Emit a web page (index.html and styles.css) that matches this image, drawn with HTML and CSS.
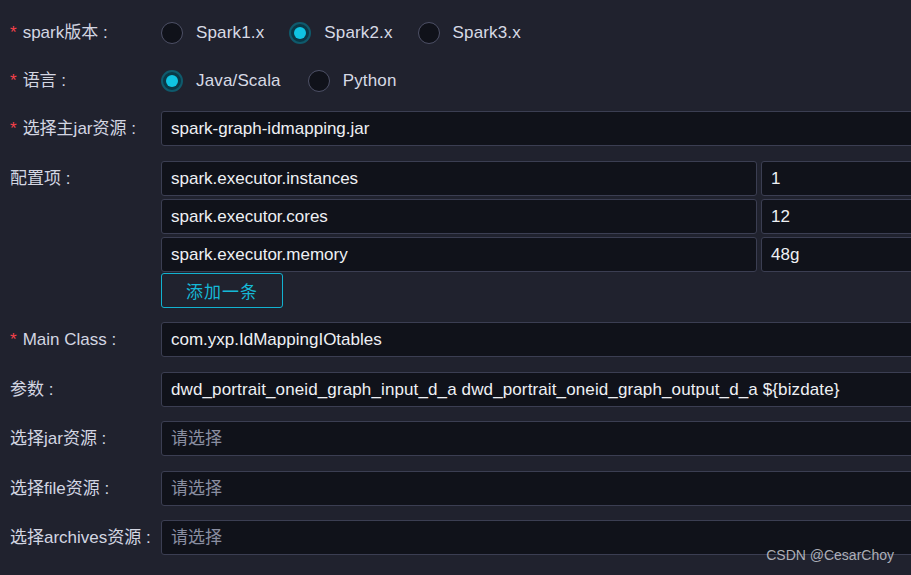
FILE: index.html
```html
<!DOCTYPE html>
<html lang="zh">
<head>
<meta charset="utf-8">
<link rel="stylesheet" href="styles.css">
</head>
<body>
<form class="form">
  <div class="item item-radio">
    <label class="label"><span class="req">*</span>spark版本 :</label>
    <div class="control radios">
      <span class="radio"><span class="dot"></span>Spark1.x</span>
      <span class="radio checked"><span class="dot"></span>Spark2.x</span>
      <span class="radio"><span class="dot"></span>Spark3.x</span>
    </div>
  </div>
  <div class="item item-radio second">
    <label class="label"><span class="req">*</span>语言 :</label>
    <div class="control radios">
      <span class="radio checked wide"><span class="dot"></span>Java/Scala</span>
      <span class="radio"><span class="dot"></span>Python</span>
    </div>
  </div>
  <div class="item">
    <label class="label"><span class="req">*</span>选择主jar资源 :</label>
    <div class="control"><div class="input">spark-graph-idmapping.jar</div></div>
  </div>
  <div class="item">
    <label class="label">配置项 :</label>
    <div class="control">
      <div class="conf-row"><div class="input key">spark.executor.instances</div><div class="input val">1</div></div>
      <div class="conf-row"><div class="input key">spark.executor.cores</div><div class="input val">12</div></div>
      <div class="conf-row"><div class="input key">spark.executor.memory</div><div class="input val">48g</div></div>
      <button type="button" class="btn">添加一条</button>
    </div>
  </div>
  <div class="item">
    <label class="label"><span class="req">*</span>Main Class :</label>
    <div class="control"><div class="input">com.yxp.IdMappingIOtables</div></div>
  </div>
  <div class="item">
    <label class="label">参数 :</label>
    <div class="control"><div class="input args">dwd_portrait_oneid_graph_input_d_a dwd_portrait_oneid_graph_output_d_a ${bizdate}</div></div>
  </div>
  <div class="item">
    <label class="label">选择jar资源 :</label>
    <div class="control"><div class="input placeholder">请选择</div></div>
  </div>
  <div class="item">
    <label class="label">选择file资源 :</label>
    <div class="control"><div class="input placeholder">请选择</div></div>
  </div>
  <div class="item">
    <label class="label">选择archives资源 :</label>
    <div class="control"><div class="input placeholder">请选择</div></div>
  </div>
</form>
<div class="watermark">CSDN @CesarChoy</div>
</body>
</html>
```
FILE: styles.css
```css
html, body {
  margin: 0;
  padding: 0;
  background: #20222e;
  overflow: hidden;
}
body {
  width: 911px;
  height: 575px;
  position: relative;
  font-family: "Liberation Sans", "Noto Sans CJK SC", sans-serif;
  font-size: 17px;
  color: #d3d6e2;
}
.form {
  padding: 16px 0 0 10px;
}
.item {
  display: flex;
  align-items: flex-start;
  margin-bottom: 14.5px;
}
.item-radio {
  margin-bottom: 14px;
  height: 34px;
}
.item-radio.second {
  margin-bottom: 13px;
}
.label {
  width: 151px;
  flex: none;
  line-height: 35px;
  height: 35px;
  white-space: nowrap;
  color: #d3d6e2;
}
.item-radio .label {
  line-height: 34px;
  height: 34px;
}
.req {
  color: #f5414a;
  margin-right: 6px;
}
.control {
  flex: 1;
  min-width: 0;
}
.radios {
  display: flex;
  align-items: center;
  height: 34px;
}
.radio {
  display: inline-flex;
  align-items: center;
  margin-right: 25px;
  color: #d7dae5;
  white-space: nowrap;
  letter-spacing: 0.15px;
}
.radio.wide {
  margin-right: 27px;
}
.dot {
  width: 22px;
  height: 22px;
  box-sizing: border-box;
  border-radius: 50%;
  border: 1px solid #4d5066;
  background: #10121a;
  margin-right: 13px;
  display: inline-flex;
  align-items: center;
  justify-content: center;
}
.checked .dot {
  border: 2px solid #0f5a6c;
  background: #0a3846;
}
.checked .dot::after {
  content: "";
  width: 12px;
  height: 12px;
  border-radius: 50%;
  background: #10c4e2;
}
.input {
  height: 35px;
  box-sizing: border-box;
  border: 1px solid #3b3e52;
  border-radius: 3px;
  background: #10121a;
  color: #eef0f4;
  line-height: 33px;
  padding: 0 9px;
  white-space: nowrap;
  overflow: hidden;
  margin-right: -6px;
}
.placeholder {
  color: #8a8ea1;
}
.conf-row {
  display: flex;
  gap: 4px;
  margin-bottom: 3px;
}
.conf-row .key {
  width: 596px;
  flex: none;
  margin-right: 0;
}
.conf-row .val {
  flex: 1;
}
.conf-row:nth-child(3) {
  margin-bottom: 1px;
}
.btn {
  display: block;
  width: 122px;
  height: 35px;
  box-sizing: border-box;
  background: transparent;
  border: 1px solid #12b2d0;
  border-radius: 3px;
  color: #15b8d6;
  font-family: "Liberation Sans", "Noto Sans CJK SC", sans-serif;
  font-size: 17px;
  letter-spacing: 1px;
  padding: 0;
}
.args {
  letter-spacing: 0.12px;
}
.watermark {
  position: absolute;
  right: 17px;
  bottom: 12px;
  font-size: 14px;
  color: rgba(200, 202, 210, 0.85);
  font-family: "Liberation Sans", sans-serif;
}
```
